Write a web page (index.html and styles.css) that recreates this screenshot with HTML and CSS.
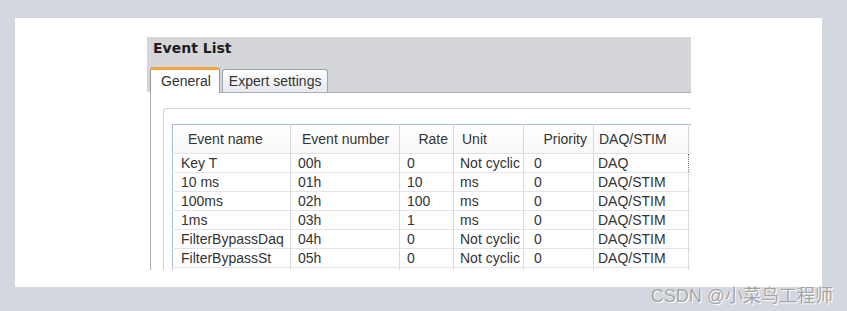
FILE: index.html
```html
<!DOCTYPE html>
<html lang="en">
<head>
  <meta charset="UTF-8" />
  <meta name="viewport" content="width=device-width, initial-scale=1.0"/>
  <title>Event List</title>
  <link rel="stylesheet" href="styles.css">
</head>
<body>
  <div class="card">
    <div class="shot">
      <div class="win-head">
        <div class="win-title">Event List</div>
        <div class="tabs">
          <div class="tab active">General</div>
          <div class="tab">Expert settings</div>
        </div>
      </div>

      <div class="tab-body">
        <div class="group">
          <table class="events">
            <colgroup>
              <col style="width:118px">
              <col style="width:109px">
              <col style="width:54px">
              <col style="width:70px">
              <col style="width:70px">
              <col style="width:95px">
              <col style="width:40px">
            </colgroup>
            <thead>
              <tr>
                <th class="c-name">Event name</th>
                <th class="c-num">Event number</th>
                <th class="c-rate">Rate</th>
                <th class="c-unit">Unit</th>
                <th class="c-prio">Priority</th>
                <th class="c-daq">DAQ/STIM</th>
                <th class="c-fill"></th>
              </tr>
            </thead>
            <tbody id="eventRows"></tbody>
          </table>
        </div>
      </div>
    </div>
  </div>

  <div class="watermark">CSDN @小菜鸟工程师</div>

  <script>
    const events = [
      { name: "Key T", num: "00h", rate: "0", unit: "Not cyclic", prio: "0", daq: "DAQ" },
      { name: "10 ms", num: "01h", rate: "10", unit: "ms", prio: "0", daq: "DAQ/STIM" },
      { name: "100ms", num: "02h", rate: "100", unit: "ms", prio: "0", daq: "DAQ/STIM" },
      { name: "1ms", num: "03h", rate: "1", unit: "ms", prio: "0", daq: "DAQ/STIM" },
      { name: "FilterBypassDaq", num: "04h", rate: "0", unit: "Not cyclic", prio: "0", daq: "DAQ/STIM" },
      { name: "FilterBypassSt", num: "05h", rate: "0", unit: "Not cyclic", prio: "0", daq: "DAQ/STIM" },
      { name: "", num: "", rate: "", unit: "", prio: "", daq: "" }
    ];

    const body = document.getElementById("eventRows");
    events.forEach((e, i) => {
      body.innerHTML += `
        <tr class="${i === 0 ? 'focused' : ''}">
          <td class="c-name">${e.name}</td>
          <td class="c-num">${e.num}</td>
          <td class="c-rate">${e.rate}</td>
          <td class="c-unit">${e.unit}</td>
          <td class="c-prio">${e.prio}</td>
          <td class="c-daq">${e.daq}</td>
          <td class="c-fill"></td>
        </tr>`;
    });
  </script>
</body>
</html>
```

FILE: styles.css
```css
body {
  margin: 0;
  padding: 18px 25px 24px 15px;
  background-color: #d3d7df;
  font-family: "Liberation Sans", Arial, sans-serif;
}

.card {
  background-color: #ffffff;
  height: 269px;
  padding: 19px 0 0 132px;
  box-sizing: border-box;
}

.shot {
  width: 544px;
  height: 233px;
  overflow: hidden;
  background-color: #ffffff;
  color: #333333;
}

.win-head {
  height: 55px;
  background-color: #d5d6da;
  display: flex;
  flex-direction: column;
  justify-content: space-between;
}

.win-title {
  padding: 3px 0 0 6px;
  font-family: "DejaVu Sans", sans-serif;
  font-weight: bold;
  font-size: 14px;
  color: #1e1e1e;
}

.tabs {
  display: flex;
  align-items: flex-end;
  gap: 2px;
  padding-left: 3px;
}

.tab {
  height: 22px;
  line-height: 22px;
  padding: 0 6px;
  font-size: 14px;
  color: #333333;
  border: 1px solid #9aa6b6;
  border-bottom: none;
  border-radius: 3px 3px 0 0;
  background: linear-gradient(#ffffff, #e6e8ef);
}

.tab.active {
  height: 23px;
  line-height: 23px;
  padding: 0 8px 0 10px;
  background: #ffffff;
  border-color: #919b9c;
  border-top: 3px solid #f2a640;
  margin-bottom: -1px;
  position: relative;
  z-index: 1;
}

.tab-body {
  margin-left: 3px;
  height: 178px;
  border-left: 1px solid #a9b0b4;
  border-top: 1px solid #a9b0b4;
  padding: 15px 0 0 12px;
  box-sizing: border-box;
}

.group {
  border: 1px solid #d3d3cb;
  border-right: none;
  border-bottom: none;
  border-radius: 4px 0 0 0;
  padding: 15px 0 0 8px;
  height: 200px;
}

.events {
  border-collapse: collapse;
  table-layout: fixed;
  width: 556px;
  font-size: 14px;
  border-top: 1px solid #a7bcd3;
  border-left: 1px solid #a7bcd3;
}

.events th {
  height: 28px;
  font-weight: normal;
  text-align: left;
  padding: 0 6px;
  white-space: nowrap;
  border-right: 1px solid #d8d8d8;
  border-bottom: 1px solid #e2e2e2;
  background: linear-gradient(#ffffff, #f7f7f7);
}

.events th.c-name { padding-left: 15px; }
.events th.c-num { padding-left: 11px; }
.events th.c-rate { text-align: right; padding-right: 5px; }
.events th.c-unit { padding-left: 8px; }
.events th.c-prio { text-align: right; padding-right: 6px; }
.events th.c-daq { padding-left: 5px; }

.events td {
  height: 18px;
  padding: 0 0 0 7px;
  line-height: 18px;
  white-space: nowrap;
  overflow: hidden;
  border-right: 1px solid #dadada;
  border-bottom: 1px solid #e4e4e4;
}

.events td.c-name { padding-left: 8px; }
.events td.c-unit { padding-left: 6px; }
.events td.c-prio { padding-left: 10px; }
.events td.c-daq { padding-left: 4px; }

.events tr.focused td {
  border-top: 1px dotted #777777;
}

.events tr.focused td.c-daq {
  border-right: 1px dotted #777777;
}

.events .c-fill {
  border-right: none;
}

.watermark {
  position: absolute;
  right: 14px;
  top: 281px;
  font-family: "Liberation Sans", "Noto Sans CJK SC", sans-serif;
  font-size: 18px;
  color: #a3a3a3;
  text-shadow: 0 0 1px #ffffff, 1px 1px 0 #ffffff;
}
```
